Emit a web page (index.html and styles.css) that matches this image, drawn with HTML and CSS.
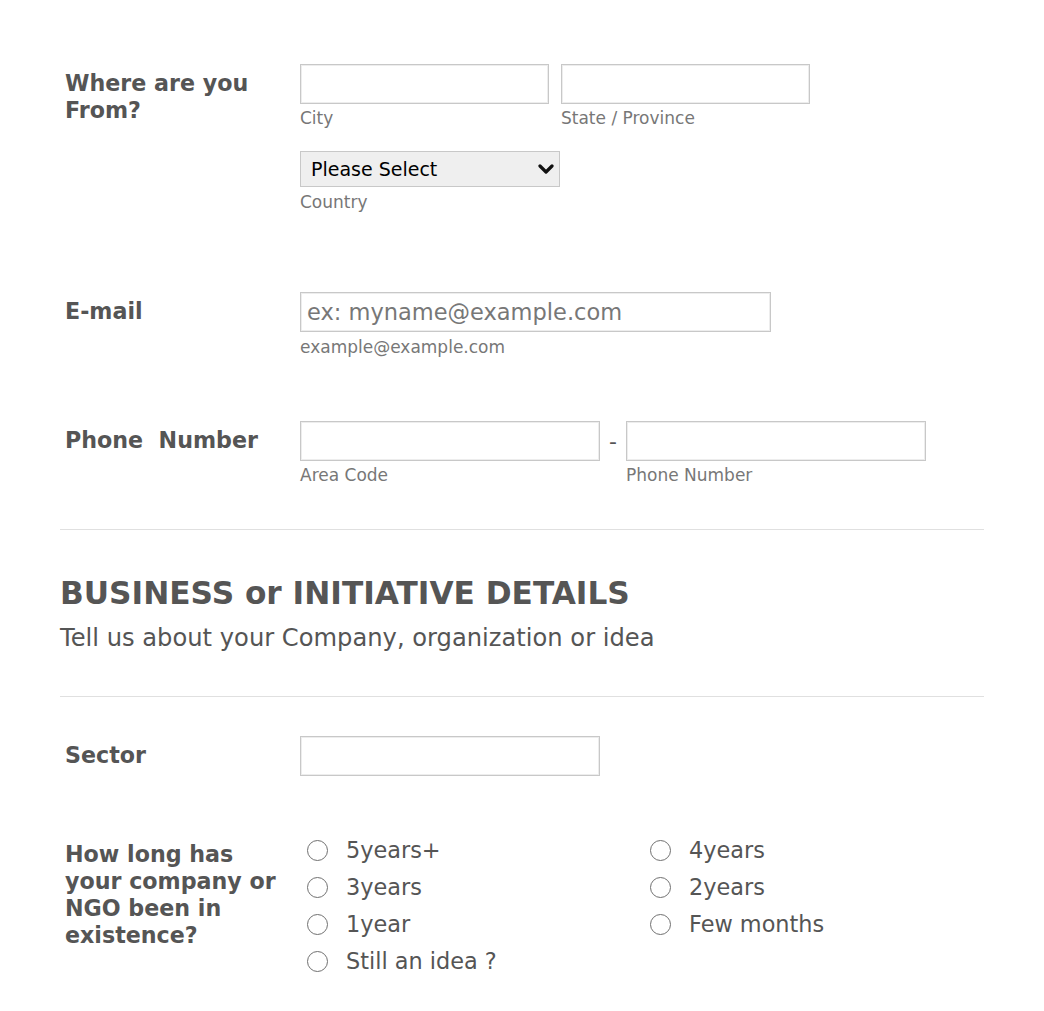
FILE: index.html
```html
<!DOCTYPE html>
<html lang="en">
<head>
    <meta charset="UTF-8">
    <meta name="viewport" content="width=device-width, initial-scale=1.0">
    <title>Business Registration Form</title>
    <link rel="stylesheet" href="styles.css">
</head>
<body>
    <div class="form">
        <!-- Location -->
        <div class="row row-address">
            <div class="label">Where are you<br>From?</div>
            <div class="field">
                <div class="inline">
                    <div class="sub-field">
                        <input class="input w-city" type="text">
                        <span class="sublabel">City</span>
                    </div>
                    <div class="sub-field">
                        <input class="input w-city" type="text">
                        <span class="sublabel">State / Province</span>
                    </div>
                </div>
                <div class="sub-field country">
                    <div class="select-wrap">
                        <select class="select">
                            <option>Please Select</option>
                        </select>
                        <svg class="select-arrow" width="16" height="10" viewBox="0 0 16 10">
                            <path d="M2 2 L8 8 L14 2" fill="none" stroke="#111" stroke-width="3.2" stroke-linecap="round" stroke-linejoin="round"/>
                        </svg>
                    </div>
                    <span class="sublabel">Country</span>
                </div>
            </div>
        </div>

        <!-- Email -->
        <div class="row row-email">
            <div class="label">E-mail</div>
            <div class="field">
                <div class="sub-field">
                    <input class="input w-email" type="email" placeholder="ex: myname@example.com">
                    <span class="sublabel">example@example.com</span>
                </div>
            </div>
        </div>

        <!-- Phone -->
        <div class="row row-phone">
            <div class="label">Phone&nbsp; Number</div>
            <div class="field">
                <div class="inline phone">
                    <div class="sub-field">
                        <input class="input w-phone" type="tel">
                        <span class="sublabel">Area Code</span>
                    </div>
                    <span class="dash">-</span>
                    <div class="sub-field">
                        <input class="input w-phone" type="tel">
                        <span class="sublabel">Phone Number</span>
                    </div>
                </div>
            </div>
        </div>

        <hr class="divider">

        <div class="section-head">
            <h2>BUSINESS or INITIATIVE DETAILS</h2>
            <p class="subtitle">Tell us about your Company, organization or idea</p>
        </div>

        <hr class="divider">

        <!-- Sector -->
        <div class="row row-sector">
            <div class="label">Sector</div>
            <div class="field">
                <input class="input w-phone" type="text">
            </div>
        </div>

        <!-- Existence -->
        <div class="row row-existence">
            <div class="label">How long has<br>your company or<br>NGO been in<br>existence?</div>
            <div class="field">
                <div class="radio-grid">
                    <label class="radio"><input type="radio" name="existence"><span>5years+</span></label>
                    <label class="radio"><input type="radio" name="existence"><span>4years</span></label>
                    <label class="radio"><input type="radio" name="existence"><span>3years</span></label>
                    <label class="radio"><input type="radio" name="existence"><span>2years</span></label>
                    <label class="radio"><input type="radio" name="existence"><span>1year</span></label>
                    <label class="radio"><input type="radio" name="existence"><span>Few months</span></label>
                    <label class="radio"><input type="radio" name="existence"><span>Still an idea ?</span></label>
                </div>
            </div>
        </div>
    </div>
</body>
</html>
```

FILE: styles.css
```css
body {
    margin: 0;
    background-color: #fff;
    font-family: "DejaVu Sans", Verdana, sans-serif;
    color: #555;
}
.form {
    width: 924px;
    padding: 64px 60px 40px 60px;
}
.row {
    display: grid;
    grid-template-columns: 240px 1fr;
}
.label {
    padding: 6px 0 0 5px;
    font-size: 22.2px;
    font-weight: bold;
    line-height: 27px;
    color: #555;
}
.field {
    display: flex;
    flex-direction: column;
}
.inline {
    display: flex;
    gap: 12px;
}
.sub-field {
    display: flex;
    flex-direction: column;
}
.sublabel {
    margin-top: 3px;
    font-size: 17px;
    line-height: 22px;
    color: #777;
}
.input {
    box-sizing: border-box;
    height: 40px;
    padding: 0 6px;
    border: 1px solid #c8c8c8;
    box-shadow: inset 0 0 0 1px #ededed;
    background-color: #fff;
    font-family: "DejaVu Sans", Verdana, sans-serif;
    font-size: 22.5px;
    color: #555;
    outline: none;
}
.input::placeholder {
    color: #777;
}
.w-city {
    width: 249px;
}
.w-email {
    width: 471px;
}
.w-phone {
    width: 300px;
}
.country {
    margin-top: 22px;
    align-items: flex-start;
}
.country .sublabel {
    margin-top: 4px;
}
.select-wrap {
    position: relative;
}
.select {
    appearance: none;
    box-sizing: border-box;
    width: 260px;
    height: 36px;
    padding: 0 30px 0 10px;
    border: 1px solid #c8c8c8;
    border-radius: 0;
    background-color: #efefef;
    font-family: "DejaVu Sans", Verdana, sans-serif;
    font-size: 19px;
    color: #000;
}
.select-arrow {
    position: absolute;
    right: 6px;
    top: 13px;
    pointer-events: none;
}
.row-email {
    margin-top: 79px;
}
.row-email .sublabel {
    margin-top: 4px;
}
.row-phone {
    margin-top: 63px;
}
.phone {
    gap: 0;
}
.dash {
    width: 26px;
    padding-top: 6px;
    text-align: center;
    font-size: 22px;
    line-height: 30px;
    color: #555;
}
.divider {
    margin: 0;
    border: 0;
    border-top: 1px solid #e0e0e0;
}
.row-phone + .divider {
    margin-top: 43px;
}
.section-head {
    padding: 45px 0 43px 0;
}
.section-head h2 {
    margin: 0;
    font-size: 31.2px;
    line-height: 36px;
    font-weight: bold;
    color: #555;
}
.subtitle {
    margin: 12px 0 0 0;
    font-size: 24.2px;
    line-height: 30px;
    color: #555;
}
.row-sector {
    margin-top: 39px;
}
.row-existence {
    margin-top: 59px;
}
.radio-grid {
    display: grid;
    grid-template-columns: 343px 343px;
    row-gap: 7px;
}
.radio {
    display: flex;
    align-items: center;
    gap: 18px;
    height: 30px;
    padding-left: 7px;
    font-size: 22.4px;
    color: #555;
    cursor: pointer;
}
.radio input {
    appearance: none;
    box-sizing: border-box;
    width: 21px;
    height: 21px;
    margin: 0;
    border: 1.5px solid #707070;
    border-radius: 50%;
    background-color: #fff;
}
.radio input:checked {
    background: radial-gradient(circle, #555 0 5px, #fff 6px);
}
```
